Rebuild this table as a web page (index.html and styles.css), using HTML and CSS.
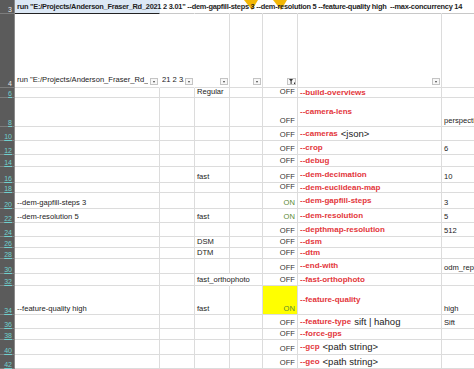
FILE: index.html
```html
<!DOCTYPE html>
<html lang="en">
<head>
<meta charset="UTF-8">
<title>ODM options sheet</title>
<link rel="stylesheet" href="styles.css">
</head>
<body>
<div class="sheet">
  <svg class="arrows" width="60" height="14" viewBox="0 0 60 14">
    <path d="M0 0 L14 0 L8 10 Z" fill="#f2b705"/>
    <path d="M29 0 L43 0 L37 10 Z" fill="#f2b705"/>
  </svg>

  <div class="row h14 top">
    <div class="rh light">3</div>
    <div class="c spill sel"><span class="cmd">run "E:/Projects/Anderson_Fraser_Rd_2021 2 3.01" --dem-gapfill-steps 3 --dem-resolution 5 --feature-quality high &nbsp;--max-concurrency 14</span></div>
    <div class="c nb"></div><div class="c nb"></div><div class="c nb"></div><div class="c nb"></div><div class="c nb"></div><div class="c nb"></div>
  </div>

  <div class="row h74 head">
    <div class="rh light">4</div>
    <div class="c nb"><span class="clip-a">run "E:/Projects/Anderson_Fraser_Rd_2021 2 3.01"</span><i class="dd"></i></div>
    <div class="c nb"><span class="clip-b">21 2 3.01"</span><i class="dd"></i></div>
    <div class="c"><i class="dd"></i></div>
    <div class="c"><i class="dd"></i></div>
    <div class="c"><i class="dd flt"><svg width="6" height="5" viewBox="0 0 6 5"><path d="M0 0 H4 L2.6 2 V5 H1.6 V2 Z" fill="#333"/><rect x="5" y="3.5" width="1" height="1.5" fill="#333"/></svg></i></div>
    <div class="c"><i class="dd"></i></div>
    <div class="c"><i class="dd"></i></div>
  </div>

  <div class="row h10">
    <div class="rh">6</div><div class="c"></div><div class="c"></div><div class="c">Regular</div><div class="c"></div>
    <div class="c off">OFF</div><div class="c opt">--build-overviews</div><div class="c"></div>
  </div>
  <div class="row h29">
    <div class="rh">8</div><div class="c"></div><div class="c"></div><div class="c"></div><div class="c"></div>
    <div class="c off">OFF</div><div class="c opt">--camera-lens</div><div class="c">perspective</div>
  </div>
  <div class="row h14">
    <div class="rh">10</div><div class="c"></div><div class="c"></div><div class="c"></div><div class="c"></div>
    <div class="c off">OFF</div><div class="c opt">--cameras <span class="arg">&lt;json&gt;</span></div><div class="c"></div>
  </div>
  <div class="row h14">
    <div class="rh">12</div><div class="c"></div><div class="c"></div><div class="c"></div><div class="c"></div>
    <div class="c off">OFF</div><div class="c opt">--crop</div><div class="c">6</div>
  </div>
  <div class="row h12">
    <div class="rh">14</div><div class="c"></div><div class="c"></div><div class="c"></div><div class="c"></div>
    <div class="c off">OFF</div><div class="c opt">--debug</div><div class="c"></div>
  </div>
  <div class="row h16">
    <div class="rh">16</div><div class="c"></div><div class="c"></div><div class="c">fast</div><div class="c"></div>
    <div class="c off">OFF</div><div class="c opt">--dem-decimation</div><div class="c">10</div>
  </div>
  <div class="row h10">
    <div class="rh">18</div><div class="c"></div><div class="c"></div><div class="c"></div><div class="c"></div>
    <div class="c off">OFF</div><div class="c opt">--dem-euclidean-map</div><div class="c"></div>
  </div>
  <div class="row h16">
    <div class="rh">20</div><div class="c">--dem-gapfill-steps 3</div><div class="c"></div><div class="c"></div><div class="c"></div>
    <div class="c on">ON</div><div class="c opt">--dem-gapfill-steps</div><div class="c">3</div>
  </div>
  <div class="row h14">
    <div class="rh">22</div><div class="c">--dem-resolution 5</div><div class="c"></div><div class="c">fast</div><div class="c"></div>
    <div class="c on">ON</div><div class="c opt">--dem-resolution</div><div class="c">5</div>
  </div>
  <div class="row h14">
    <div class="rh">24</div><div class="c"></div><div class="c"></div><div class="c"></div><div class="c"></div>
    <div class="c off">OFF</div><div class="c opt">--depthmap-resolution</div><div class="c">512</div>
  </div>
  <div class="row h11">
    <div class="rh">26</div><div class="c"></div><div class="c"></div><div class="c">DSM</div><div class="c"></div>
    <div class="c off">OFF</div><div class="c opt">--dsm</div><div class="c"></div>
  </div>
  <div class="row h11">
    <div class="rh">28</div><div class="c"></div><div class="c"></div><div class="c">DTM</div><div class="c"></div>
    <div class="c off">OFF</div><div class="c opt">--dtm</div><div class="c"></div>
  </div>
  <div class="row h15">
    <div class="rh">30</div><div class="c"></div><div class="c"></div><div class="c"></div><div class="c"></div>
    <div class="c off">OFF</div><div class="c opt">--end-with</div><div class="c">odm_report</div>
  </div>
  <div class="row h12">
    <div class="rh">32</div><div class="c"></div><div class="c"></div><div class="c spill">fast_orthophoto</div><div class="c"></div>
    <div class="c off">OFF</div><div class="c opt">--fast-orthophoto</div><div class="c"></div>
  </div>
  <div class="row h29">
    <div class="rh">34</div><div class="c">--feature-quality high</div><div class="c"></div><div class="c">fast</div><div class="c"></div>
    <div class="c on mark">ON</div><div class="c opt">--feature-quality</div><div class="c">high</div>
  </div>
  <div class="row h14">
    <div class="rh">36</div><div class="c"></div><div class="c"></div><div class="c"></div><div class="c"></div>
    <div class="c off">OFF</div><div class="c opt">--feature-type <span class="arg">sift | hahog</span></div><div class="c">Sift</div>
  </div>
  <div class="row h11">
    <div class="rh">38</div><div class="c"></div><div class="c"></div><div class="c"></div><div class="c"></div>
    <div class="c off">OFF</div><div class="c opt">--force-gps</div><div class="c"></div>
  </div>
  <div class="row h15">
    <div class="rh">40</div><div class="c"></div><div class="c"></div><div class="c"></div><div class="c"></div>
    <div class="c off">OFF</div><div class="c opt">--gcp <span class="arg">&lt;path string&gt;</span></div><div class="c"></div>
  </div>
  <div class="row h14">
    <div class="rh">42</div><div class="c"></div><div class="c"></div><div class="c"></div><div class="c"></div>
    <div class="c off">OFF</div><div class="c opt">--geo <span class="arg">&lt;path string&gt;</span></div><div class="c"></div>
  </div>
</div>
</body>
</html>
```

FILE: styles.css
```css
body { margin:0; background:#fff; font-family:'Liberation Sans',Arial,sans-serif; color:#222; }
.sheet { position:relative; width:474px; height:369px; overflow:hidden; }
.arrows { position:absolute; left:244px; top:0; }

.row { display:grid; grid-template-columns:15px 145px 35px 35px 33px 35px 144px 60px; }
.h10 { height:10px; } .h11 { height:11px; } .h12 { height:12px; } .h14 { height:14px; }
.h15 { height:15px; } .h16 { height:16px; } .h29 { height:29px; } .h74 { height:74px; }

.c { position:relative; box-sizing:border-box; border-right:1px solid #dcdcdc; border-bottom:1px solid #dcdcdc; display:flex; align-items:flex-end; padding:0 2px 1px; font-size:7.6px; line-height:1; white-space:nowrap; overflow:hidden; }
.c.nb { border-right-color:transparent; }
.c.spill { overflow:visible; border-right-color:transparent; z-index:1; }

/* row headers */
.rh { box-sizing:border-box; background:#5b5b5b; border-bottom:1px solid #7d7d7d; border-right:1px solid #8a8a8a; display:flex; align-items:flex-end; justify-content:flex-end; padding:0 2px 0 0; font-size:7px; line-height:1; color:#6fd0cf; text-decoration:underline; }
.rh.light { color:#e8e8e8; text-decoration:none; }

/* top row with the command */
.top .c { border-bottom-color:#c8c8c8; padding-bottom:3px; }
.top .c.sel { background:#dce8f5; border-bottom:1px solid #222; }
.cmd { font-weight:bold; color:#1e1e1e; position:relative; z-index:2; font-size:7.4px; letter-spacing:-0.24px; }

/* filter header row */
.head .c { padding-bottom:3px; }
.clip-a { width:131px; overflow:hidden; }
.clip-b { width:22px; overflow:hidden; }
.dd { position:absolute; right:1px; bottom:2px; width:8px; height:7px; box-sizing:border-box; border:1px solid #c4c4c4; background:#f7f7f7; }
.dd::after { content:''; position:absolute; left:2px; top:2px; border-left:1.5px solid transparent; border-right:1.5px solid transparent; border-top:2px solid #444; }
.dd.flt { width:9px; display:flex; align-items:center; justify-content:center; }
.dd.flt::after { display:none; }

.off, .on { justify-content:flex-end; color:#333; }
.on { color:#5c8a34; }
.mark { background:#ffff00; }
.opt { align-items:center; padding-bottom:0; color:#e3363b; font-weight:bold; font-size:8px; }
.arg { color:#222; font-weight:normal; font-size:9.5px; margin-left:3px; }
```
